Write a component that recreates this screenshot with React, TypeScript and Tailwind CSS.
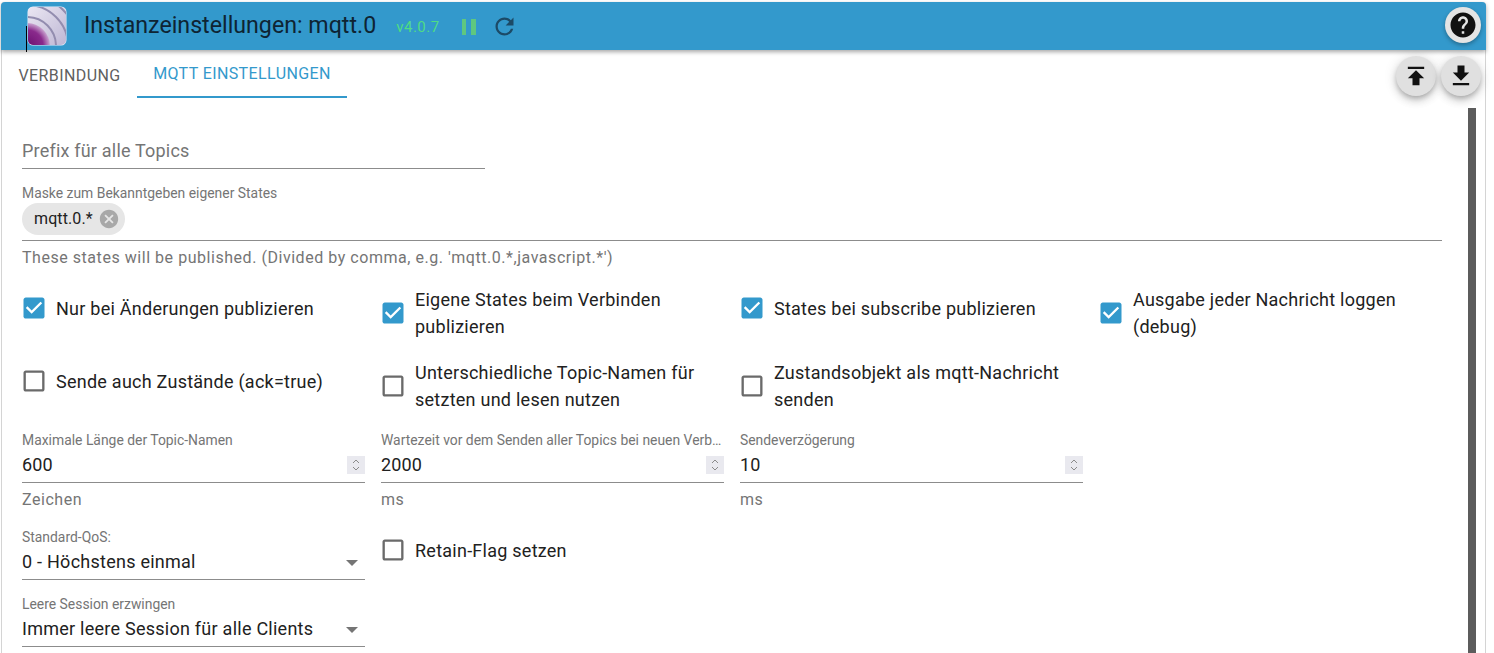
import React from "react";

const font = { fontFamily: "Roboto, sans-serif" };

function Check({ checked }: { checked: boolean }) {
  return checked ? (
    <svg width="28" height="28" viewBox="0 0 24 24" className="shrink-0">
      <path fill="#3399cc" d="M19 3H5c-1.11 0-2 .9-2 2v14c0 1.1.89 2 2 2h14c1.11 0 2-.9 2-2V5c0-1.1-.89-2-2-2z" />
      <path fill="#fff" d="M10 17l-5-5 1.41-1.41L10 14.17l7.59-7.59L19 8z" />
    </svg>
  ) : (
    <svg width="28" height="28" viewBox="0 0 24 24" className="shrink-0">
      <path fill="#6a6a6a" d="M19 5v14H5V5h14m0-2H5c-1.1 0-2 .9-2 2v14c0 1.1.9 2 2 2h14c1.1 0 2-.9 2-2V5c0-1.1-.9-2-2-2z" />
    </svg>
  );
}

function CheckItem({ checked, label, tall }: { checked: boolean; label: React.ReactNode; tall?: boolean }) {
  return (
    <div className={tall ? "flex items-center h-[54px]" : "flex items-center h-[44px]"}>
      <div className="w-[36px] -ml-[2px] flex shrink-0">
        <Check checked={checked} />
      </div>
      <div className="text-[18px] leading-[27px] tracking-[0.25px] text-[#212121]">{label}</div>
    </div>
  );
}

function NumberField({ label, value, helper }: { label: string; value: string; helper: string }) {
  return (
    <div className="min-w-0">
      <div className="text-[13.9px] leading-[16px] text-[#757575] truncate">{label}</div>
      <div className="flex items-center justify-between h-[35px] border-b border-[#8c8c8c]">
        <span className="-mt-[2px] text-[18px] tracking-[0.17px] text-[#212121]">{value}</span>
        <span className="w-[18px] h-[18px] bg-[#e9e9ef] flex items-center justify-center">
          <svg width="10" height="14" viewBox="0 0 10 14" fill="none" stroke="#8a8a8a" strokeWidth="1">
            <path d="M2 5l3-3 3 3M2 9l3 3 3-3" />
          </svg>
        </span>
      </div>
      <div className="mt-[6px] text-[16px] leading-[22px] tracking-[0.53px] text-[#757575]">{helper}</div>
    </div>
  );
}

function SelectField({ label, value }: { label: string; value: string }) {
  return (
    <div>
      <div className="text-[13.9px] leading-[16px] text-[#757575]">{label}</div>
      <div className="flex items-center justify-between h-[35px] border-b border-[#8c8c8c]">
        <span className="-mt-[2px] text-[18px] tracking-[0.25px] text-[#212121]">{value}</span>
        <span className="mr-[7px] mt-[2px] w-0 h-0 border-l-[6.5px] border-r-[6.5px] border-t-[6px] border-l-transparent border-r-transparent border-t-[#757575]" />
      </div>
    </div>
  );
}

function Fab({ d }: { d: string }) {
  return (
    <button className="w-[40px] h-[40px] rounded-full bg-[#e0e0e0] flex items-center justify-center shadow-[0_3px_5px_-1px_rgba(0,0,0,0.2),0_5px_8px_0_rgba(0,0,0,0.14),0_1px_14px_0_rgba(0,0,0,0.12)]">
      <svg width="28" height="28" viewBox="0 0 24 24" fill="#111">
        <path d={d} />
      </svg>
    </button>
  );
}

export default function App() {
  return (
    <div style={font} className="relative w-[1494px] h-[653px] overflow-hidden bg-white pl-[2px] pt-[2px]">
      <div className="w-[1485px] h-[660px] rounded-t-[4px] border-r border-l border-[#d4d4d4] flex flex-col relative -ml-[1px]">
        <header className="relative z-10 h-[48px] shrink-0 -mx-[1px] bg-[#3399cc] rounded-t-[4px] flex items-center shadow-[0_2px_4px_rgba(0,0,0,0.35)]">
          <svg width="40" height="40" viewBox="0 0 40 40" className="ml-[26px] shrink-0">
            <defs>
              <linearGradient id="bg" x1="0" y1="0" x2="1" y2="1">
                <stop offset="0" stopColor="#ece8f3" />
                <stop offset="1" stopColor="#bdb6d4" />
              </linearGradient>
              <radialGradient id="pur" cx="0" cy="40" r="23" gradientUnits="userSpaceOnUse">
                <stop offset="0" stopColor="#6a0f70" />
                <stop offset="0.7" stopColor="#8a2a8c" />
                <stop offset="1" stopColor="#c9a4d0" />
              </radialGradient>
              <clipPath id="logoClip">
                <rect x="1" y="1" width="38" height="38" rx="5" />
              </clipPath>
            </defs>
            <rect x="0.5" y="0.5" width="39" height="39" rx="5.5" fill="#e6ecf8" />
            <g clipPath="url(#logoClip)">
              <rect width="40" height="40" fill="url(#bg)" />
              <circle cx="0" cy="40" r="23" fill="url(#pur)" />
              <g fill="none" stroke="#938daf" strokeWidth="2">
                <circle cx="0" cy="40" r="29" />
                <circle cx="0" cy="40" r="41" />
                <circle cx="0" cy="40" r="51" />
              </g>
            </g>
          </svg>
          <h1 className="ml-[17px] -mt-[3px] text-[23.2px] leading-[32px] text-[#0e2433] font-normal whitespace-nowrap">Instanzeinstellungen: mqtt.0</h1>
          <span className="ml-[20px] text-[15px] tracking-[0.5px] text-[#4fdc85] mt-[2px]">v4.0.7</span>
          <span className="ml-[22px] flex gap-[5px] mt-[1px]">
            <span className="w-[4.5px] h-[16px] bg-[#5fc77f]" />
            <span className="w-[4.5px] h-[16px] bg-[#5fc77f]" />
          </span>
          <svg width="27" height="27" viewBox="0 0 24 24" fill="#1c4a66" className="ml-[15px]">
            <path d="M17.65 6.35C16.2 4.9 14.21 4 12 4c-4.42 0-7.99 3.58-7.99 8s3.57 8 7.99 8c3.73 0 6.84-2.55 7.73-6h-2.08c-.82 2.33-3.04 4-5.65 4-3.31 0-6-2.69-6-6s2.69-6 6-6c1.66 0 3.14.69 4.22 1.78L13 11h7V4l-2.35 2.35z" />
          </svg>
          <button className="ml-auto mr-[5px] -mt-[3px] w-[36px] h-[36px] rounded-full bg-[#e4e4e4] flex items-center justify-center shadow-[0_2px_4px_rgba(0,0,0,0.3)]">
            <svg width="30" height="30" viewBox="0 0 24 24" fill="#111">
              <path d="M12 2C6.48 2 2 6.48 2 12s4.48 10 10 10 10-4.48 10-10S17.52 2 12 2zm1 17h-2v-2h2v2zm2.07-7.75l-.9.92C13.45 12.9 13 13.5 13 15h-2v-.5c0-1.1.45-2.1 1.17-2.83l1.24-1.26c.37-.36.59-.86.59-1.41 0-1.1-.9-2-2-2s-2 .9-2 2H8c0-2.21 1.79-4 4-4s4 1.79 4 4c0 .88-.36 1.68-.93 2.25z" />
            </svg>
          </button>
        </header>

        <nav className="h-[48px] shrink-0 flex items-stretch">
          <div className="w-[135px] flex items-center justify-center pt-[4px] text-[16px] tracking-[0.4px] text-[#5f5f5f]">VERBINDUNG</div>
          <div className="w-[210px] flex items-center justify-center pt-[2px] text-[16px] tracking-[0.4px] text-[#3399cc] border-b-2 border-[#3399cc]">MQTT EINSTELLUNGEN</div>
          <div className="ml-auto mr-[4px] mt-[6px] flex gap-[5px]">
            <Fab d="M5 4v2h14V4H5zm0 10h4v6h6v-6h4l-7-7-7 7z" />
            <Fab d="M19 9h-4V3H9v6H5l7 7 7-7zM5 18v2h14v-2H5z" />
          </div>
        </nav>

        <main className="relative flex-1 pl-[20px] pr-[43px]">
          <div className="absolute right-[9px] top-[10px] bottom-0 w-[8px] bg-[#5c5c5c]" />

          <div className="pt-[42px] w-[463px] h-[71px] border-b border-[#8c8c8c]">
            <div className="text-[18px] leading-[21px] tracking-[0.2px] text-[#757575]">Prefix für alle Topics</div>
          </div>

          <div className="mt-[16px] text-[13.9px] leading-[16px] text-[#757575]">Maske zum Bekanntgeben eigener States</div>
          <div className="h-[40px] border-b border-[#8c8c8c] pt-[2px]">
            <span className="inline-flex items-center h-[32px] rounded-full bg-[#e6e6e6] pl-[12px] pr-[5px] text-[16px] tracking-[0.1px] text-[#212121]">
              mqtt.0.*
              <svg width="22" height="22" viewBox="0 0 24 24" fill="#a8a8a8" className="ml-[5px]">
                <path d="M12 2C6.47 2 2 6.47 2 12s4.47 10 10 10 10-4.47 10-10S17.53 2 12 2zm5 13.59L15.59 17 12 13.41 8.41 17 7 15.59 10.59 12 7 8.41 8.41 7 12 10.59 15.59 7 17 8.41 13.41 12 17 15.59z" />
              </svg>
            </span>
          </div>
          <div className="mt-[6px] text-[16px] leading-[22px] tracking-[0.54px] text-[#757575]">These states will be published. (Divided by comma, e.g. 'mqtt.0.*,javascript.*')</div>

          <div className="mt-[17px] grid grid-cols-[343px_343px_343px_343px] items-start gap-x-[16px] gap-y-[19px]">
            <CheckItem checked label="Nur bei Änderungen publizieren" />
            <CheckItem checked tall label={<>Eigene States beim Verbinden<br />publizieren</>} />
            <CheckItem checked label="States bei subscribe publizieren" />
            <CheckItem checked tall label={<>Ausgabe jeder Nachricht loggen<br />(debug)</>} />
            <CheckItem checked={false} label="Sende auch Zustände (ack=true)" />
            <CheckItem checked={false} tall label={<>Unterschiedliche Topic-Namen für<br />setzten und lesen nutzen</>} />
            <CheckItem checked={false} tall label={<>Zustandsobjekt als mqtt-Nachricht<br />senden</>} />
          </div>

          <div className="mt-[19px] grid grid-cols-[343px_343px_343px] gap-x-[16px]">
            <NumberField label="Maximale Länge der Topic-Namen" value="600" helper="Zeichen" />
            <NumberField label="Wartezeit vor dem Senden aller Topics bei neuen Verbindungen" value="2000" helper="ms" />
            <NumberField label="Sendeverzögerung" value="10" helper="ms" />
          </div>

          <div className="mt-[18px] grid grid-cols-[343px_343px] gap-x-[16px]">
            <div className="flex flex-col gap-[16px]">
              <SelectField label="Standard-QoS:" value="0 - Höchstens einmal" />
              <SelectField label="Leere Session erzwingen" value="Immer leere Session für alle Clients" />
            </div>
            <div className="-mt-[1px] self-start">
              <CheckItem checked={false} label="Retain-Flag setzen" />
            </div>
          </div>
        </main>
      </div>
      <div className="absolute left-[26px] top-[26px] w-px h-[26px] bg-black z-20" />
    </div>
  );
}
